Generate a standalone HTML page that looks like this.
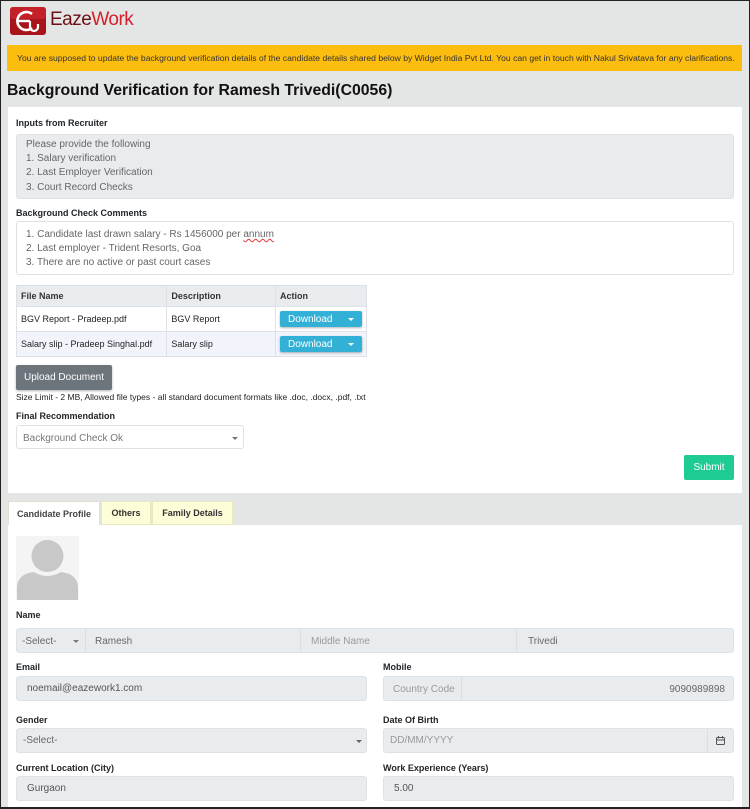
<!DOCTYPE html>
<html><head><meta charset="utf-8">
<style>
*{box-sizing:border-box;margin:0;padding:0}
body{width:750px;height:809px;overflow:hidden;background:#e4e5e5;font-family:"Liberation Sans",Arial,sans-serif;position:relative;color:#212529}
.frame{position:absolute;left:0;top:0;width:750px;height:809px;border:1px solid #222;border-bottom:2px solid #222;pointer-events:none;z-index:10}
.a{position:absolute}
.lbl{position:absolute;font-size:9px;font-weight:bold;color:#212529}
.card{position:absolute;background:#fff}
.inp{position:absolute;background:#e9ecef;border:1px solid #dfe2e5;border-radius:3px;font-size:10px;color:#555;padding-left:10px;display:flex;align-items:center}
.ph{color:#999}
table{border-collapse:collapse;position:absolute;left:16px;top:285px;width:351px;font-size:9px}
td,th{border:1px solid #dee2e6;padding:0 4px;text-align:left}
th{background:#e9ecef;height:21px;font-weight:bold;color:#333}
td{height:25px;color:#222}
.dl{display:flex;justify-content:space-between;align-items:center;background:#33b0d6;color:#fff;font-size:10px;height:16px;width:82px;border-radius:2px;padding:0 8px;box-shadow:0 1px 2px rgba(0,0,0,.3)}
.car{display:inline-block;width:0;height:0;border-left:3px solid transparent;border-right:3px solid transparent;border-top:3px solid currentColor}
</style></head><body>
<div class="frame"></div>
<svg class="a" style="left:10px;top:7px" width="36" height="28" viewBox="0 0 36 28">
<rect x="0" y="0" width="36" height="28" rx="3" fill="#a7151b"/>
<rect x="0" y="0" width="36" height="12" rx="3" fill="#c32127"/>
<path d="M22 7 A9 9 0 1 0 22 21" stroke="#fff" stroke-width="2.6" fill="none"/>
<path d="M8 14 H20" stroke="#fff" stroke-width="2.4"/>
<path d="M20 14 v6 a4 4 0 0 0 8 0 v-3" stroke="#fff" stroke-width="2.2" fill="none"/>
</svg>
<div class="a" style="left:50px;top:9px;font-size:19px;letter-spacing:-0.5px"><span style="color:#6b1016">Eaze</span><span style="color:#d4202a">Work</span></div>
<div class="a" style="left:7px;top:45px;width:735px;height:26px;background:#fdbd0e;font-size:8.6px;color:#333;padding:8px 0 0 10px;white-space:nowrap">You are supposed to update the background verification details of the candidate details shared below by Widget India Pvt Ltd. You can get in touch with Nakul Srivatava for any clarifications.</div>
<div class="a" style="left:7px;top:82px;font-size:15.8px;font-weight:bold;color:#111">Background Verification for Ramesh Trivedi(C0056)</div>
<div class="card" style="left:8px;top:107px;width:734px;height:386px"></div>
<div class="lbl" style="left:16px;top:118px">Inputs from Recruiter</div>
<div class="a" style="left:16px;top:134px;width:718px;height:65px;background:#e9ecef;border:1px solid #dfe2e5;border-radius:3px;font-size:10px;color:#666;line-height:14.2px;padding:3px 0 0 9px">Please provide the following<br>1. Salary verification<br>2. Last Employer Verification<br>3. Court Record Checks</div>
<div class="lbl" style="left:16px;top:208px">Background Check Comments</div>
<div class="a" style="left:16px;top:221px;width:718px;height:54px;background:#fff;border:1px solid #dfe2e5;border-radius:3px;font-size:10px;color:#666;line-height:14.2px;padding:6px 0 0 9px">1. Candidate last drawn salary - Rs 1456000 per <span style="text-decoration:underline wavy #e33">annum</span><br>2. Last employer - Trident Resorts, Goa<br>3. There are no active or past court cases</div>
<table>
<tr><th style="width:151px">File Name</th><th style="width:109px">Description</th><th>Action</th></tr>
<tr><td>BGV Report - Pradeep.pdf</td><td>BGV Report</td><td><div class="dl">Download <span class="car"></span></div></td></tr>
<tr style="background:#f1f4fa"><td>Salary slip - Pradeep Singhal.pdf</td><td>Salary slip</td><td><div class="dl">Download <span class="car"></span></div></td></tr>
</table>
<div class="a" style="left:16px;top:365px;width:96px;height:25px;background:#6c747c;color:#fff;font-size:10px;display:flex;align-items:center;justify-content:center;border-radius:2px;box-shadow:0 1px 2px rgba(0,0,0,.3)">Upload Document</div>
<div class="a" style="left:16px;top:392px;font-size:8.5px;color:#222">Size Limit - 2 MB, Allowed file types - all standard document formats like .doc, .docx, .pdf, .txt</div>
<div class="lbl" style="left:16px;top:411px">Final Recommendation</div>
<div class="a" style="left:16px;top:425px;width:228px;height:24px;border:1px solid #dfe2e5;border-radius:3px;font-size:10px;color:#777;padding:7px 0 0 6px">Background Check Ok<span class="car" style="position:absolute;right:5px;top:11px;color:#777"></span></div>
<div class="a" style="left:684px;top:455px;width:50px;height:25px;background:#1fcb94;color:#fff;font-size:10px;display:flex;align-items:center;justify-content:center;border-radius:2px">Submit</div>
<div class="a" style="left:8px;top:501px;width:92px;height:25px;background:#fff;border:1px solid #e0e0d0;border-bottom:none;font-size:9px;font-weight:bold;color:#444;display:flex;align-items:center;justify-content:center">Candidate Profile</div>
<div class="a" style="left:101px;top:501px;width:50px;height:24px;background:#fdfdd8;border:1px solid #e8e8c0;font-size:9px;font-weight:bold;color:#333;display:flex;align-items:center;justify-content:center">Others</div>
<div class="a" style="left:152px;top:501px;width:81px;height:24px;background:#fdfdd8;border:1px solid #e8e8c0;font-size:9px;font-weight:bold;color:#333;display:flex;align-items:center;justify-content:center">Family Details</div>
<div class="card" style="left:8px;top:525px;width:734px;height:284px"></div>
<svg class="a" style="left:16px;top:536px" width="63" height="64" viewBox="0 0 63 64"><rect width="63" height="64" fill="#f4f4f4"/><circle cx="31.5" cy="20" r="16" fill="#c8c8c8"/><path d="M1 64 V52 Q1 38 18 36 Q31 44 45 36 Q62 38 62 52 V64Z" fill="#c8c8c8"/></svg>
<div class="lbl" style="left:16px;top:610px">Name</div>
<div class="inp" style="left:16px;top:628px;width:718px;height:25px;padding:0"></div>
<div class="a" style="left:16px;top:628px;width:69px;height:25px;font-size:10px;color:#666;padding:8px 0 0 6px">-Select-<span class="car" style="position:absolute;right:6px;top:12px;color:#777"></span></div>
<div class="a" style="left:85px;top:629px;width:1px;height:23px;background:#dcdfe2"></div>
<div class="a" style="left:95px;top:636px;font-size:10px;color:#666">Ramesh</div>
<div class="a" style="left:300px;top:629px;width:1px;height:23px;background:#dcdfe2"></div>
<div class="a" style="left:311px;top:636px;font-size:10px;color:#999">Middle Name</div>
<div class="a" style="left:516px;top:629px;width:1px;height:23px;background:#dcdfe2"></div>
<div class="a" style="left:528px;top:636px;font-size:10px;color:#666">Trivedi</div>
<div class="lbl" style="left:16px;top:662px">Email</div>
<div class="inp" style="left:16px;top:676px;width:351px;height:25px">noemail@eazework1.com</div>
<div class="lbl" style="left:383px;top:662px">Mobile</div>
<div class="inp" style="left:383px;top:676px;width:351px;height:25px;padding:0"></div>
<div class="a" style="left:393px;top:684px;font-size:10px;color:#999">Country Code</div>
<div class="a" style="left:461px;top:677px;width:1px;height:23px;background:#dcdfe2"></div>
<div class="a" style="left:600px;top:684px;width:125px;text-align:right;font-size:10px;color:#666">9090989898</div>
<div class="lbl" style="left:16px;top:715px">Gender</div>
<div class="inp" style="left:16px;top:728px;width:351px;height:25px;padding-left:6px;color:#666">-Select-<span class="car" style="position:absolute;right:4px;top:11px;color:#666"></span></div>
<div class="lbl" style="left:383px;top:715px">Date Of Birth</div>
<div class="inp" style="left:383px;top:728px;width:351px;height:25px;padding-left:6px"><span class="ph">DD/MM/YYYY</span></div>
<div class="a" style="left:707px;top:729px;width:1px;height:23px;background:#dcdfe2"></div>
<svg class="a" style="left:716px;top:736px" width="9" height="9" viewBox="0 0 9 9"><rect x="0.5" y="1.5" width="8" height="7" rx="1" fill="none" stroke="#555"/><path d="M0.5 4 H8.5 M2.5 0 V2.5 M6.5 0 V2.5" stroke="#555"/></svg>
<div class="lbl" style="left:16px;top:763px">Current Location (City)</div>
<div class="inp" style="left:16px;top:776px;width:351px;height:25px">Gurgaon</div>
<div class="lbl" style="left:383px;top:763px">Work Experience (Years)</div>
<div class="inp" style="left:383px;top:776px;width:351px;height:25px">5.00</div>
</body></html>
